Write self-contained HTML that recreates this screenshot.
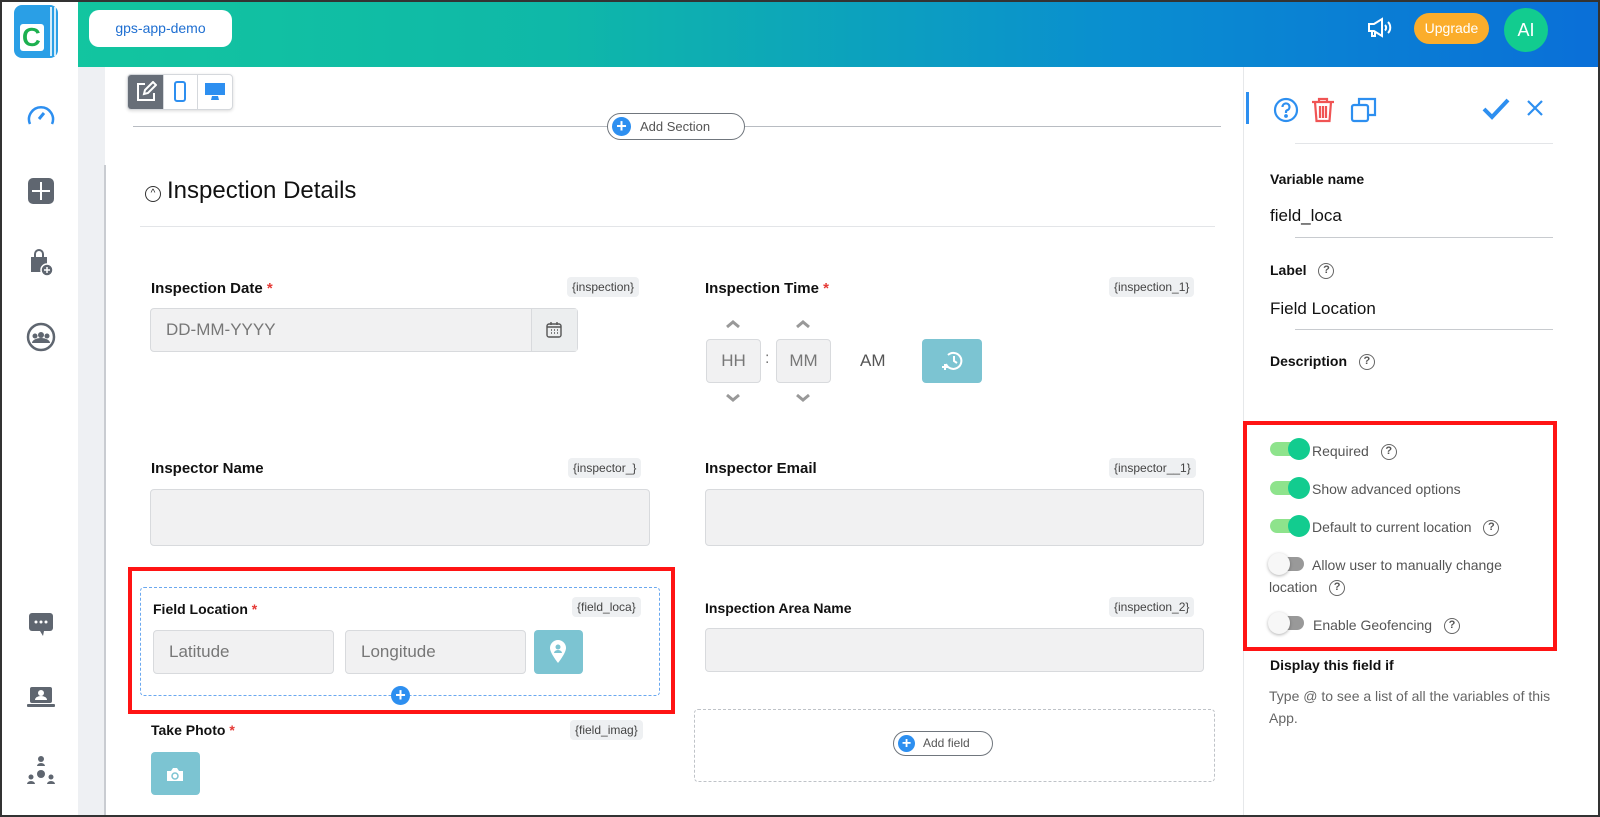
<!DOCTYPE html>
<html><head><meta charset="utf-8"><style>
*{box-sizing:border-box;margin:0;padding:0}
body{width:1600px;height:817px;overflow:hidden;font-family:"Liberation Sans",sans-serif;background:#fff;position:relative;color:#222}
.a{position:absolute}
.hdr{left:0;top:0;width:1600px;height:67px;background:linear-gradient(90deg,#13c79e 0%,#0fb8a8 35%,#0a8ed0 70%,#0a6fd8 100%)}
.lbl{font-size:15px;font-weight:bold;color:#111}
.req{color:#e53935}
.tag{font-size:12px;color:#444;background:#eef0f2;border-radius:4px;padding:3px 5px}
.inp{background:#f1f1f2;border:1px solid #d8dadd;border-radius:4px;color:#777;font-size:17px;padding-left:15px;display:flex;align-items:center}
.btn{background:#7cc4d2;border-radius:4px}
.q{display:inline-block;width:16px;height:16px;border:1.5px solid #666;border-radius:50%;font-size:11px;text-align:center;line-height:13px;color:#555;margin-left:8px;vertical-align:middle;font-weight:bold}
.tg{position:absolute;width:38px;height:24px}
.tg .tr{position:absolute;left:0;top:5px;width:34px;height:14px;border-radius:7px}
.tg .kn{position:absolute;top:1px;width:22px;height:22px;border-radius:50%}
.on .tr{background:#8ee38c}.on .kn{left:18px;background:#12cc8f}
.off .tr{background:#999}.off .kn{left:-2px;background:#f7f7f7;box-shadow:0 1px 3px rgba(0,0,0,.3)}
.opt{font-size:14px;color:#555}
</style></head><body>
<div class="a hdr"></div>
<div class="a" style="left:0;top:0;width:78px;height:67px;background:#fff"></div>
<!-- logo -->
<div class="a" style="left:14px;top:5px;width:44px;height:53px;background:#2a9fe6;border-radius:8px"></div>
<div class="a" style="left:50px;top:7px;width:2px;height:49px;background:#fff;opacity:.8"></div>
<div class="a" style="left:54px;top:7px;width:2px;height:49px;background:#fff;opacity:.8"></div>
<div class="a" style="left:20px;top:24px;width:24px;height:27px;background:#fff;border-radius:3px"></div>
<div class="a" style="left:22px;top:22px;font-size:26px;font-weight:bold;color:#1db04f">C</div>
<div class="a" style="left:89px;top:10px;width:143px;height:37px;background:#fff;border-radius:10px;font-size:14px;color:#1f6fd1;text-align:center;line-height:37px">gps-app-demo</div>
<!-- megaphone -->
<svg class="a" style="left:1366px;top:16px" width="28" height="24" viewBox="0 0 28 24" fill="none" stroke="#fff" stroke-width="2"><path d="M3 8h5l8-5v17l-8-5H3z"/><path d="M6 15v5h3v-5"/><path d="M19 9c1.5 1.5 1.5 4 0 5.5M22 6c3 3 3 8 0 11"/></svg>
<div class="a" style="left:1414px;top:13px;width:75px;height:31px;background:#fbad2b;border-radius:16px;color:#fff;font-size:14px;text-align:center;line-height:31px">Upgrade</div>
<div class="a" style="left:1504px;top:8px;width:44px;height:44px;background:#12cc8f;border-radius:50%;color:#fff;font-size:18px;text-align:center;line-height:44px">AI</div>
<!-- sidebar -->
<div class="a" style="left:0;top:67px;width:78px;height:750px;background:#fff"></div>
<div class="a" style="left:78px;top:67px;width:27px;height:750px;background:#eef0f3"></div>
<div class="a" style="left:104px;top:165px;width:2px;height:652px;background:#c9ccd1"></div>
<svg class="a" style="left:26px;top:102px" width="30" height="26" viewBox="0 0 30 26" fill="none" stroke="#2d8ff0" stroke-width="2.5"><path d="M4 22A12 12 0 1 1 26 22"/><path d="M13 17l5-6" stroke-width="3"/></svg>
<div class="a" style="left:28px;top:178px;width:26px;height:26px;background:#5f6670;border-radius:5px"></div>
<div class="a" style="left:40px;top:182px;width:2px;height:18px;background:#fff"></div>
<div class="a" style="left:32px;top:190px;width:18px;height:2px;background:#fff"></div>
<svg class="a" style="left:28px;top:249px" width="26" height="28" viewBox="0 0 26 28"><path d="M3 8h16v15H3z" fill="#5f6670"/><path d="M7 8V5a4 4 0 0 1 8 0v3" stroke="#5f6670" stroke-width="2" fill="none"/><circle cx="19" cy="21" r="6" fill="#5f6670" stroke="#fff" stroke-width="1.5"/><path d="M19 18v6M16 21h6" stroke="#fff" stroke-width="1.5"/></svg>
<svg class="a" style="left:26px;top:322px" width="30" height="30" viewBox="0 0 30 30"><circle cx="15" cy="15" r="13" fill="none" stroke="#5f6670" stroke-width="2.5"/><circle cx="15" cy="13" r="3" fill="#5f6670"/><circle cx="9" cy="14" r="2.5" fill="#5f6670"/><circle cx="21" cy="14" r="2.5" fill="#5f6670"/><path d="M6 21a9 5 0 0 1 18 0z" fill="#5f6670"/></svg>
<svg class="a" style="left:28px;top:612px" width="26" height="26" viewBox="0 0 26 26"><rect x="1" y="1" width="24" height="18" rx="3" fill="#5f6670"/><path d="M12 19l3 5 1-5z" fill="#5f6670"/><circle cx="8" cy="10" r="1.5" fill="#fff"/><circle cx="13" cy="10" r="1.5" fill="#fff"/><circle cx="18" cy="10" r="1.5" fill="#fff"/></svg>
<svg class="a" style="left:26px;top:685px" width="30" height="24" viewBox="0 0 30 24"><rect x="4" y="2" width="22" height="16" rx="2" fill="#5f6670"/><circle cx="15" cy="8" r="3" fill="#fff"/><path d="M9 15a6 4 0 0 1 12 0z" fill="#fff"/><rect x="1" y="19" width="28" height="3" rx="1" fill="#5f6670"/></svg>
<svg class="a" style="left:26px;top:755px" width="30" height="32" viewBox="0 0 30 32" fill="#5f6670"><circle cx="15" cy="4" r="3"/><path d="M11 11a4 3 0 0 1 8 0z"/><circle cx="15" cy="19" r="4"/><circle cx="5" cy="22" r="2.5"/><path d="M1 29a4 3 0 0 1 8 0z"/><circle cx="25" cy="22" r="2.5"/><path d="M21 29a4 3 0 0 1 8 0z"/></svg>
<!-- view switcher -->
<div class="a" style="left:127px;top:74px;width:106px;height:36px;border:1px solid #d5d8dc;border-radius:4px;background:#fff;box-shadow:0 1px 3px rgba(0,0,0,.15)"></div>
<div class="a" style="left:128px;top:75px;width:35px;height:34px;background:#676e78;border-radius:3px 0 0 3px"></div>
<svg class="a" style="left:135px;top:81px" width="22" height="22" viewBox="0 0 22 22" fill="none" stroke="#fff" stroke-width="2"><path d="M10 3H3v16h16v-7"/><path d="M9 13l1-4 8-8 3 3-8 8z"/></svg>
<div class="a" style="left:163px;top:75px;width:1px;height:34px;background:#d5d8dc"></div>
<div class="a" style="left:197px;top:75px;width:1px;height:34px;background:#d5d8dc"></div>
<svg class="a" style="left:173px;top:81px" width="14" height="22" viewBox="0 0 14 22" fill="none" stroke="#2d8ff0" stroke-width="2"><rect x="2" y="1" width="10" height="19" rx="2"/></svg>
<svg class="a" style="left:204px;top:82px" width="22" height="20" viewBox="0 0 22 20"><rect x="1" y="1" width="20" height="12" fill="#2d8ff0"/><path d="M8 14h6l1 4H7z" fill="#2d8ff0"/></svg>
<!-- add section -->
<div class="a" style="left:133px;top:126px;width:1088px;height:1px;background:#b8bcc2"></div>
<div class="a" style="left:607px;top:113px;width:138px;height:27px;background:#fff;border:1.5px solid #70767d;border-radius:14px;font-size:13px;color:#555;line-height:25px;padding-left:32px">Add Section</div>
<div class="a" style="left:612px;top:117px;width:19px;height:19px;border-radius:50%;background:#2d8ff0;color:#fff;font-size:18px;font-weight:bold;text-align:center;line-height:19px">+</div>
<!-- section title -->
<div class="a" style="left:145px;top:186px;width:16px;height:16px;border:1.5px solid #333;border-radius:50%;font-size:10px;text-align:center;line-height:14px">^</div>
<div class="a" style="left:167px;top:177px;font-size:24px;color:#111">Inspection Details</div>
<div class="a" style="left:140px;top:226px;width:1075px;height:1px;background:#e3e5e8"></div>
<!-- row 1 -->
<div class="a lbl" style="left:151px;top:280px">Inspection Date <span class="req">*</span></div>
<div class="a tag" style="left:567px;top:277px">{inspection}</div>
<div class="a inp" style="left:150px;top:308px;width:428px;height:44px">DD-MM-YYYY</div>
<div class="a" style="left:531px;top:309px;width:46px;height:42px;border-left:1px solid #d8dadd;background:#eceeef"></div>
<svg class="a" style="left:545px;top:321px" width="18" height="18" viewBox="0 0 18 18" fill="none" stroke="#555" stroke-width="1.4"><rect x="2" y="3" width="14" height="13" rx="2"/><path d="M2 6h14M6 1v3M12 1v3"/><path d="M6 9h1M9 9h1M12 9h1M6 12h1M9 12h1M12 12h1" stroke-width="1.6"/></svg>
<div class="a lbl" style="left:705px;top:280px">Inspection Time <span class="req">*</span></div>
<div class="a tag" style="left:1109px;top:277px">{inspection_1}</div>
<svg class="a" style="left:724px;top:318px" width="18" height="12" viewBox="0 0 18 12" fill="none" stroke="#999" stroke-width="3"><path d="M3 9l6-5 6 5"/></svg>
<svg class="a" style="left:794px;top:318px" width="18" height="12" viewBox="0 0 18 12" fill="none" stroke="#999" stroke-width="3"><path d="M3 9l6-5 6 5"/></svg>
<div class="a inp" style="left:706px;top:339px;width:55px;height:44px;justify-content:center;padding:0">HH</div>
<div class="a" style="left:765px;top:350px;color:#777;font-size:16px">:</div>
<div class="a inp" style="left:776px;top:339px;width:55px;height:44px;justify-content:center;padding:0">MM</div>
<div class="a" style="left:860px;top:351px;color:#555;font-size:17px">AM</div>
<svg class="a" style="left:724px;top:392px" width="18" height="12" viewBox="0 0 18 12" fill="none" stroke="#999" stroke-width="3"><path d="M3 3l6 5 6-5"/></svg>
<svg class="a" style="left:794px;top:392px" width="18" height="12" viewBox="0 0 18 12" fill="none" stroke="#999" stroke-width="3"><path d="M3 3l6 5 6-5"/></svg>
<div class="a btn" style="left:922px;top:339px;width:60px;height:44px"></div>
<svg class="a" style="left:940px;top:350px" width="24" height="22" viewBox="0 0 24 22" fill="none" stroke="#fff" stroke-width="2"><path d="M6 14A8 8 0 1 0 8 5"/><path d="M14 6v5l3 2"/><path d="M5 14v6M2 17h6"/></svg>
<!-- row 2 -->
<div class="a lbl" style="left:151px;top:460px">Inspector Name</div>
<div class="a tag" style="left:568px;top:458px">{inspector_}</div>
<div class="a inp" style="left:150px;top:489px;width:500px;height:57px"></div>
<div class="a lbl" style="left:705px;top:460px">Inspector Email</div>
<div class="a tag" style="left:1109px;top:458px">{inspector__1}</div>
<div class="a inp" style="left:705px;top:489px;width:499px;height:57px"></div>
<!-- field location -->
<div class="a" style="left:128px;top:567px;width:547px;height:147px;border:4px solid #ff1414"></div>
<div class="a" style="left:140px;top:587px;width:520px;height:109px;border:1.5px dashed #6aa8ef;border-radius:4px"></div>
<div class="a lbl" style="left:153px;top:601px;font-size:14px">Field Location <span class="req">*</span></div>
<div class="a tag" style="left:572px;top:597px">{field_loca}</div>
<div class="a inp" style="left:153px;top:630px;width:181px;height:44px">Latitude</div>
<div class="a inp" style="left:345px;top:630px;width:181px;height:44px">Longitude</div>
<div class="a btn" style="left:534px;top:630px;width:49px;height:44px"></div>
<svg class="a" style="left:548px;top:639px" width="20" height="26" viewBox="0 0 20 26"><path d="M10 1a8 8 0 0 1 8 8c0 5-8 15-8 15S2 14 2 9a8 8 0 0 1 8-8z" fill="#fff"/><circle cx="10" cy="8" r="2.5" fill="#7cc4d2"/><path d="M6 14a4 3 0 0 1 8 0z" fill="#7cc4d2"/></svg>
<div class="a" style="left:391px;top:686px;width:19px;height:19px;border-radius:50%;background:#2d8ff0;color:#fff;font-weight:bold;font-size:18px;text-align:center;line-height:19px">+</div>
<div class="a lbl" style="left:705px;top:600px;font-size:14px">Inspection Area Name</div>
<div class="a tag" style="left:1109px;top:597px">{inspection_2}</div>
<div class="a inp" style="left:705px;top:628px;width:499px;height:44px"></div>
<!-- take photo -->
<div class="a lbl" style="left:151px;top:722px;font-size:14px">Take Photo <span class="req">*</span></div>
<div class="a tag" style="left:570px;top:720px">{field_imag}</div>
<div class="a btn" style="left:151px;top:752px;width:49px;height:43px"></div>
<svg class="a" style="left:166px;top:767px" width="18" height="15" viewBox="0 0 18 15"><path d="M1 4h4l2-3h4l2 3h4v10H1z" fill="#fff"/><circle cx="9" cy="9" r="3" fill="none" stroke="#7cc4d2" stroke-width="1.5"/></svg>
<div class="a" style="left:694px;top:709px;width:521px;height:73px;border:1.5px dashed #bfc3c8;border-radius:4px"></div>
<div class="a" style="left:893px;top:731px;width:100px;height:25px;border:1.5px solid #70767d;border-radius:13px;font-size:12px;color:#555;line-height:22px;padding-left:29px">Add field</div>
<div class="a" style="left:898px;top:735px;width:17px;height:17px;border-radius:50%;background:#2d8ff0;color:#fff;font-weight:bold;font-size:16px;text-align:center;line-height:17px">+</div>
<!-- right panel -->
<div class="a" style="left:1243px;top:67px;width:1px;height:750px;background:#e6e8ea"></div>
<div class="a" style="left:1246px;top:92px;width:3px;height:32px;background:#2d8ff0"></div>
<svg class="a" style="left:1272px;top:96px" width="28" height="28" viewBox="0 0 28 28" fill="none" stroke="#2d8ff0" stroke-width="2.2"><circle cx="14" cy="14" r="11"/><path d="M10.5 11a3.5 3.5 0 1 1 4.5 3.3c-.7.3-1 1-1 1.7v1"/><circle cx="14" cy="20" r=".8" fill="#2d8ff0"/></svg>
<svg class="a" style="left:1310px;top:96px" width="26" height="28" viewBox="0 0 26 28" fill="none" stroke="#f05454" stroke-width="2.2"><path d="M2 6h22M9 6V3h8v3M5 6l1.5 19h13L21 6M10 10v12M13 10v12M16 10v12"/></svg>
<svg class="a" style="left:1350px;top:96px" width="28" height="28" viewBox="0 0 28 28" fill="none" stroke="#2d8ff0" stroke-width="2.2"><rect x="2" y="9" width="16" height="16" rx="2"/><path d="M9 9V3h16v16h-7"/></svg>
<svg class="a" style="left:1482px;top:97px" width="28" height="24" viewBox="0 0 28 24" fill="none" stroke="#2d8ff0" stroke-width="4"><path d="M2 12l8 8L26 3"/></svg>
<svg class="a" style="left:1526px;top:99px" width="18" height="18" viewBox="0 0 18 18" fill="none" stroke="#2d8ff0" stroke-width="2.2"><path d="M2 2l14 14M16 2L2 16"/></svg>
<div class="a" style="left:1295px;top:143px;width:258px;height:1px;background:#e3e5e8"></div>
<div class="a lbl" style="left:1270px;top:171px;font-size:14px">Variable name</div>
<div class="a" style="left:1270px;top:206px;font-size:17px;color:#111">field_loca</div>
<div class="a" style="left:1295px;top:237px;width:258px;height:1px;background:#c8cbcf"></div>
<div class="a lbl" style="left:1270px;top:262px;font-size:14px">Label <span class="q">?</span></div>
<div class="a" style="left:1270px;top:299px;font-size:17px;color:#111">Field Location</div>
<div class="a" style="left:1295px;top:329px;width:258px;height:1px;background:#c8cbcf"></div>
<div class="a lbl" style="left:1270px;top:353px;font-size:14px">Description <span class="q">?</span></div>
<div class="a" style="left:1243px;top:421px;width:314px;height:230px;border:4px solid #ff1414"></div>
<div class="tg on" style="left:1270px;top:437px"><div class="tr"></div><div class="kn"></div></div>
<div class="a opt" style="left:1312px;top:443px">Required <span class="q">?</span></div>
<div class="tg on" style="left:1270px;top:476px"><div class="tr"></div><div class="kn"></div></div>
<div class="a opt" style="left:1312px;top:481px">Show advanced options</div>
<div class="tg on" style="left:1270px;top:514px"><div class="tr"></div><div class="kn"></div></div>
<div class="a opt" style="left:1312px;top:519px">Default to current location <span class="q">?</span></div>
<div class="tg off" style="left:1270px;top:552px"><div class="tr"></div><div class="kn"></div></div>
<div class="a opt" style="left:1312px;top:557px">Allow user to manually change</div>
<div class="a opt" style="left:1269px;top:579px">location <span class="q">?</span></div>
<div class="tg off" style="left:1270px;top:611px"><div class="tr"></div><div class="kn"></div></div>
<div class="a opt" style="left:1313px;top:617px">Enable Geofencing <span class="q">?</span></div>
<div class="a lbl" style="left:1270px;top:657px;font-size:14px">Display this field if</div>
<div class="a" style="left:1269px;top:685px;font-size:14px;color:#666;width:290px;line-height:22px">Type @ to see a list of all the variables of this App.</div>
<!-- frame -->
<div class="a" style="left:0;top:0;width:1600px;height:817px;border:2px solid #333;pointer-events:none"></div>
</body></html>
